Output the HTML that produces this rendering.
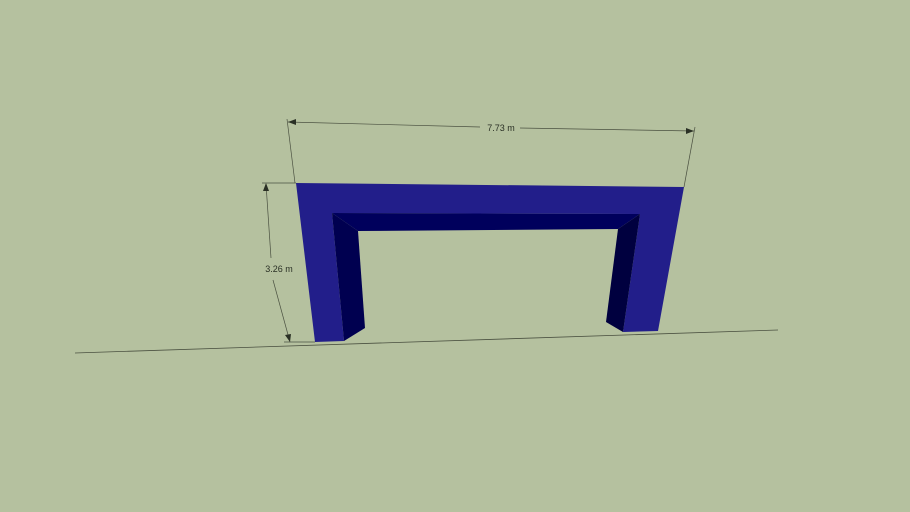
<!DOCTYPE html>
<html><head><style>html,body{margin:0;padding:0;background:#b5c19f;width:910px;height:512px;overflow:hidden}</style></head>
<body>
<svg width="910" height="512" viewBox="0 0 910 512" xmlns="http://www.w3.org/2000/svg">
<rect width="910" height="512" fill="#b5c19f"/>
<line x1="75" y1="353" x2="778" y2="330" stroke="#4a5040" stroke-width="0.8"/>
<polygon points="296,183 684,187 658,331 623,332 640,214 332,213 344,341 315,342" fill="#221e8a"/>
<polygon points="332,213 640,214 618,229 358,231" fill="#00005c"/>
<polygon points="332,213 358,231 365,328 344,341" fill="#000050"/>
<polygon points="640,214 618,229 606,322 623,332" fill="#00003f"/>
<g stroke="#4a5040" stroke-width="0.7" fill="none">
<line x1="287" y1="119" x2="295" y2="183"/>
<line x1="695" y1="127" x2="684" y2="187"/>
<line x1="288" y1="122" x2="480" y2="127"/>
<line x1="520" y1="128" x2="694" y2="131"/>
<line x1="262" y1="183" x2="296" y2="183"/>
<line x1="266" y1="184" x2="271" y2="258"/>
<line x1="273" y1="280" x2="290" y2="342"/>
<line x1="284" y1="342" x2="315" y2="342"/>
</g>
<g fill="#2a3025">
<polygon points="288,122 296,119 296,125"/>
<polygon points="694,131 686,128 686,134"/>
<polygon points="266,183 263,191 269,191"/>
<polygon points="290,342 285,335 291,334"/>
</g>
<text x="501" y="131" font-family="Liberation Sans, sans-serif" font-size="9" fill="#2a3025" text-anchor="middle">7.73 m</text>
<text x="279" y="272" font-family="Liberation Sans, sans-serif" font-size="9" fill="#2a3025" text-anchor="middle">3.26 m</text>
</svg>
</body></html>
